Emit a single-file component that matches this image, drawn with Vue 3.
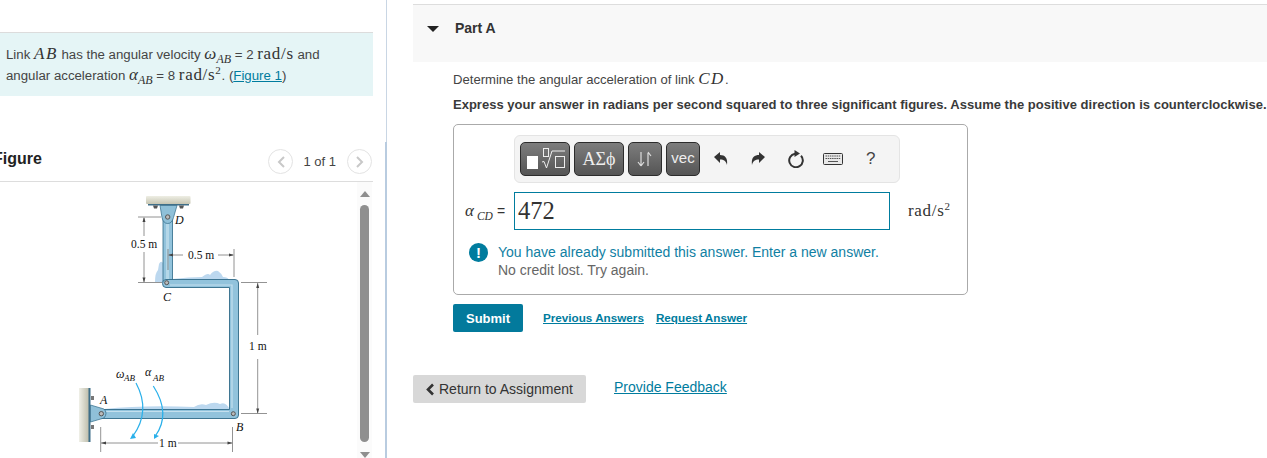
<script setup>
const tools = ['undo', 'redo', 'reset', 'keyboard', 'help']
</script>

<template>
  <div class="page">
    <aside class="left">
      <section class="intro">
        <p>Link <i class="m var">AB</i> has the angular velocity <i class="m sym">ω</i><sub class="m">AB</sub> = 2 <span class="m rad">rad/s</span> and</p>
        <p>angular acceleration <i class="m sym">α</i><sub class="m">AB</sub> = 8 <span class="m rad">rad/s<sup>2</sup></span>. (<a href="#">Figure 1</a>)</p>
      </section>
      <header class="fig-head">
        <h2>Figure</h2>
        <div class="pager">
          <span class="circle"><svg width="10" height="14" viewBox="0 0 10 14"><path d="M8 2 3 7l5 5" fill="none" stroke="#c8c8c8" stroke-width="2"/></svg></span>
          <span class="count">1 of 1</span>
          <span class="circle"><svg width="10" height="14" viewBox="0 0 10 14"><path d="M2 2l5 5-5 5" fill="none" stroke="#c8c8c8" stroke-width="2"/></svg></span>
        </div>
      </header>
      <div class="fig-body">
        <svg class="diagram" width="357" height="276" viewBox="0 182 357 276">
          <defs>
            <linearGradient id="stone" x1="0" y1="0" x2="0" y2="1">
              <stop offset="0" stop-color="#eeeee4"/>
              <stop offset="1" stop-color="#c6c5b2"/>
            </linearGradient>
            <linearGradient id="wall" x1="0" y1="0" x2="1" y2="0">
              <stop offset="0" stop-color="#f0f0e8"/>
              <stop offset="1" stop-color="#bdbcaa"/>
            </linearGradient>
          </defs>
          <!-- top support -->
          <rect x="146" y="196" width="44.500" height="8" rx="1" fill="url(#stone)"/>
          <rect x="148" y="204" width="41" height="1.500" fill="#3f6f89"/>
          <path d="M153 205.500h5l-1 3h-3zM179 205.500h5l-1 3h-3z" fill="#555"/>
          <!-- highlights -->
          <path d="M155 282q0-9 3-12l1-6q2-4 4-1v19zM172 279q18-2 30-2 6-5 8-2 4-5 8-4 3 2 5 6 5 0 6 3z" fill="#bcd8ef"/>
          <path d="M104 409q40-4 90-2 6-4 12-2 8-4 14-1 6-3 10 6v1H104z" fill="#bcd8ef"/>
          <!-- link CD -->
          <rect x="163" y="216" width="9.500" height="66" fill="#92c3dc" stroke="#2f6a88" stroke-width=".8"/>
          <rect x="166" y="220" width="3" height="60" fill="#b4d7e8"/>
          <path d="M160 205.500h17l-3.500 12q-1.500 6-5.800 6t-5.700-6z" fill="#8fc0d8" stroke="#2f6a88" stroke-width=".7"/>
          <!-- bent link CB -->
          <path d="M166 279.500H235q3.500 0 3.500 3.500V415q0 3.500-3.500 3.500H100V409.500H229.500V287.500H166q-3.500 0-3.500-4t3.500-4z" fill="#92c3dc" stroke="#2f6a88" stroke-width=".9"/>
          <path d="M170 285H232V408" fill="none" stroke="#c4e0ee" stroke-width="1.200"/>
          <path d="M106 411.500H229" fill="none" stroke="#c4e0ee" stroke-width="1"/>
          <!-- wall -->
          <rect x="79" y="388" width="10" height="54" fill="url(#wall)"/>
          <rect x="88.500" y="388" width="2" height="54" fill="#3f6f89"/>
          <path d="M91 396h3v4h-3zM91 425h3v4h-3z" fill="#777"/>
          <path d="M90.500 405 104 409q4 4 0 9l-13.500 4z" fill="#8fc0d8" stroke="#2f6a88" stroke-width=".7"/>
          <!-- pins -->
          <g fill="#bbb" stroke="#555" stroke-width="1">
            <circle cx="167.700" cy="217" r="2.200"/>
            <circle cx="166.700" cy="282.700" r="2"/>
            <circle cx="101.300" cy="413.700" r="2.200"/>
            <circle cx="233.300" cy="413.700" r="2"/>
          </g>
          <!-- dimension lines -->
          <g stroke="#777" stroke-width=".8" fill="none">
            <path d="M138 217h23M138 282.500h24M144 218v18M144 252v30"/>
            <path d="M168 249v21M234 249v28M169 255h14M218 255h15"/>
            <path d="M241 282.500h26M241 413.500h26M257.700 283v52M257.700 359v54"/>
            <path d="M100.700 427v25M232.500 427v25M101 443h57M178 443h54"/>
          </g>
          <g fill="#444">
            <path d="M144 217l-1.500 5h3zM144 282.500l-1.500-5h3zM168 255l5-1.500v3zM234 255l-5-1.500v3zM257.700 283l-1.500 5h3zM257.700 413.500l-1.500-5h3zM101 443l5-1.500v3zM232.500 443l-5-1.500v3z"/>
          </g>
          <!-- velocity arrows -->
          <g fill="none" stroke="#2ab0ea" stroke-width="1.200">
            <path d="M136 383q15 28-3 53"/>
            <path d="M153.300 386q18 28 2 50"/>
          </g>
          <path d="M130 439l6-1-3-5zM154 439l5-3-5-2z" fill="#2ab0ea"/>
          <!-- labels -->
          <g class="dim">
            <text x="131" y="248">0.5 m</text>
            <text x="188" y="259">0.5 m</text>
            <text x="249" y="350">1 m</text>
            <text x="159" y="447">1 m</text>
          </g>
          <g class="pt">
            <text x="175" y="224">D</text>
            <text x="163" y="301">C</text>
            <text x="100" y="404">A</text>
            <text x="236" y="431">B</text>
            <text x="116" y="378">ω</text>
            <text x="124" y="381" class="sub">AB</text>
            <text x="145" y="376">α</text>
            <text x="153" y="381" class="sub">AB</text>
          </g>
        </svg>
        <div class="scroll">
          <span class="arrow up"></span>
          <span class="thumb"></span>
          <span class="arrow down"></span>
        </div>
      </div>
    </aside>

    <div class="divider"><span class="thin"></span><span class="thick"></span></div>

    <main class="right">
      <header class="part">
        <span class="caret"></span>
        <h3>Part A</h3>
      </header>
      <div class="body">
        <p class="desc">Determine the angular acceleration of link <i class="m var">CD</i>.</p>
        <p class="task">Express your answer in radians per second squared to three significant figures. Assume the positive direction is counterclockwise.</p>

        <section class="box">
          <div class="toolbar">
            <button class="tb w50">
              <svg width="48" height="32" viewBox="0 0 48 32">
                <rect x="6" y="13" width="11" height="13" fill="#fff"/>
                <path d="M21 19l2-.5 2.500 6.500L31 8H44" fill="none" stroke="#eee" stroke-width="1"/>
                <rect x="22.500" y="5.500" width="5" height="8" fill="none" stroke="#eee"/>
                <rect x="34.500" y="13.500" width="9" height="11" fill="none" stroke="#eee"/>
              </svg>
            </button>
            <button class="tb w50 greek">ΑΣϕ</button>
            <button class="tb w34">
              <svg width="20" height="18" viewBox="0 0 20 18"><path d="M6 2v13M6 16l-3-4M6 16l3-4M13 16V3M13 2l3 4" fill="none" stroke="#ddd" stroke-width="1.200"/></svg>
            </button>
            <button class="tb w34 vec">vec</button>
            <div class="tools">
              <span v-for="t in tools" :key="t" class="tool">
                <svg v-if="t === 'undo'" width="16" height="16" viewBox="0 0 16 16"><path d="M1 6 7 1v3c5 0 8 3 7 10-1-4-3-5.500-7-5.500V12z" fill="#333"/></svg>
                <svg v-else-if="t === 'redo'" width="16" height="16" viewBox="0 0 16 16"><path d="M15 6 9 1v3C4 4 1 7 2 14c1-4 3-5.500 7-5.500V12z" fill="#333"/></svg>
                <svg v-else-if="t === 'reset'" width="18" height="18" viewBox="0 0 18 18"><path d="M14 5.800A6.800 6.800 0 1 1 8 3.700" fill="none" stroke="#333" stroke-width="2"/><path d="M7.500 0l5.500 3.500L7.500 7z" fill="#333"/></svg>
                <svg v-else-if="t === 'keyboard'" width="20" height="12" viewBox="0 0 20 12">
                  <rect x=".5" y=".5" width="19" height="11" rx="1" fill="#e8e8e8" stroke="#333"/>
                  <path d="M2.500 3h15M2.500 5.500h15" stroke="#555" stroke-dasharray="1.500 .7" fill="none"/>
                  <path d="M5 8.500h10" stroke="#555" fill="none"/>
                </svg>
                <span v-else class="q">?</span>
              </span>
            </div>
          </div>

          <div class="answer">
            <span class="label"><i class="m sym alpha">α</i><sub class="m">CD</sub><span class="eq">=</span></span>
            <div class="input">472</div>
            <span class="m rad unit">rad/s<sup>2</sup></span>
          </div>

          <div class="feedback">
            <span class="bang">!</span>
            <div class="msg">
              <div class="blue">You have already submitted this answer. Enter a new answer.</div>
              <div class="gray">No credit lost. Try again.</div>
            </div>
          </div>
        </section>

        <div class="actions">
          <button class="submit">Submit</button>
          <a href="#" class="bold first">Previous Answers</a>
          <a href="#" class="bold">Request Answer</a>
        </div>
      </div>

      <div class="bottom">
        <button class="return">
          <svg width="10" height="13" viewBox="0 0 10 13"><path d="M8 1.500 3 6.500l5 5" fill="none" stroke="#333" stroke-width="2.600"/></svg>
          Return to Assignment
        </button>
        <a href="#" class="fb">Provide Feedback</a>
      </div>
    </main>
  </div>
</template>

<style>
html, body { margin: 0; overflow: hidden; background: #fff; }
</style>

<style scoped>
.page {
  display: flex;
  width: 1267px;
  height: 458px;
  overflow: hidden;
  font-family: "Liberation Sans", Arial, sans-serif;
  font-size: 14px;
  color: #444;
}
p, h2, h3 { margin: 0; }
a { color: #007c9e; }
.m { font-family: "Liberation Serif", "DejaVu Serif", serif; color: #333; }
.var { font-size: 17px; letter-spacing: 1.500px; }
.sym { font-size: 17px; }
.rad { font-size: 17px; letter-spacing: .7px; }
sub.m { font-size: 12px; font-style: italic; line-height: 0; vertical-align: -4px; }
sup { font-size: 11px; line-height: 0; vertical-align: 6px; }

.left { width: 385px; flex: none; padding-top: 32px; box-sizing: border-box; }
.intro {
  width: 373px;
  height: 64px;
  box-sizing: border-box;
  border-top: 1px solid #dcdcdc;
  background: #e5f5f6;
  padding: 10px 0 0 6px;
  font-size: 13.250px;
}
.intro p { height: 21px; line-height: 21px; white-space: nowrap; }
.fig-head {
  width: 373px;
  height: 40px;
  margin-top: 46px;
  box-sizing: border-box;
  border-bottom: 1px solid #ddd;
  display: flex;
  justify-content: space-between;
  padding: 0 1px 7px 0;
  align-items: flex-end;
}
.fig-head h2 { margin-left: -7px; font-size: 16px; font-weight: 700; color: #222; line-height: 20px; padding-bottom: 5px; }
.pager { display: flex; align-items: center; }
.circle {
  width: 25px; height: 25px;
  box-sizing: border-box;
  border: 1px solid #e3e3e3;
  border-radius: 50%;
  display: flex; align-items: center; justify-content: center;
}
.count { margin: 0 11px 0 10px; font-size: 13px; color: #444; }
.fig-body { display: flex; height: 276px; }
.diagram { display: block; flex: none; }
.dim text { font: 11.500px "Liberation Serif", serif; fill: #111; }
.pt text { font: italic 12px "Liberation Serif", serif; fill: #111; }
.pt .sub { font-size: 9px; }
.scroll {
  width: 15px;
  height: 276px;
  background: #fbfbfb;
  display: flex;
  flex-direction: column;
  align-items: center;
}
.arrow { width: 0; height: 0; border-left: 5px solid transparent; border-right: 5px solid transparent; }
.up { border-bottom: 6px solid #8f8f8f; margin-top: 9px; }
.down { border-top: 6px solid #8f8f8f; margin-top: 10px; }
.thumb { width: 9px; height: 238px; background: #8f8f8f; border-radius: 5px; margin-top: 8px; }

.divider { width: 2px; flex: none; display: flex; flex-direction: column; }
.thin { height: 142px; width: 1px; margin-left: 1px; background: #c9d6e4; }
.thick { flex: 1; background: #b9cce0; }

.right { flex: 1; min-width: 0; padding-left: 26px; }
.part {
  margin-top: 4px;
  height: 58px;
  box-sizing: border-box;
  border-top: 1px solid #ddd;
  background: #f8f8f8;
  display: flex;
  align-items: flex-start;
  padding: 14px 0 0 14px;
}
.caret {
  width: 0; height: 0;
  margin-top: 7px;
  border-left: 6px solid transparent;
  border-right: 6px solid transparent;
  border-top: 6px solid #222;
}
.part h3 { margin-left: 16px; font-size: 14px; font-weight: 700; line-height: 18px; color: #333; }
.body { padding-left: 40px; }
.desc { margin-top: 7px; height: 20px; line-height: 20px; font-size: 13.100px; white-space: nowrap; }
.task { margin-top: 6px; height: 20px; line-height: 20px; font-size: 13px; font-weight: 700; letter-spacing: .01px; color: #3a3a3a; white-space: nowrap; }
.box {
  margin-top: 9px;
  width: 515px;
  height: 171px;
  box-sizing: border-box;
  border: 1px solid #aaa;
  border-radius: 5px;
  padding-top: 10px;
}
.toolbar {
  margin-left: 60px;
  width: 386px;
  height: 48px;
  box-sizing: border-box;
  background: #f4f4f4;
  border: 1px solid #e4e4e4;
  border-radius: 6px;
  display: flex;
  align-items: center;
  padding-left: 5px;
  gap: 4px;
}
.tb {
  height: 34px;
  padding: 0;
  box-sizing: border-box;
  border: 1px solid #2c2c2c;
  border-radius: 5px;
  background: linear-gradient(#7d7d7d, #555);
  color: #eee;
  display: flex;
  align-items: center;
  justify-content: center;
}
.w50 { width: 50px; }
.w34 { width: 34px; }
.greek { font: 18px "Liberation Serif", serif; }
.vec { font: 15px "Liberation Sans", sans-serif; padding-bottom: 3px; }
.tools { display: flex; margin-left: -2px; }
.tool { width: 37.500px; height: 34px; display: flex; align-items: center; justify-content: center; }
.q { font-size: 17px; color: #444; }
.answer { display: flex; align-items: center; height: 38px; margin-top: 9px; }
.label { width: 60px; box-sizing: border-box; padding-left: 11px; white-space: nowrap; color: #333; }
.alpha { margin-right: 3px; }
.answer sub.m { font-size: 11.500px; }
.eq { font-size: 14px; margin-left: 4px; }
.input {
  width: 376px;
  height: 38px;
  box-sizing: border-box;
  border: 1px solid #007c9e;
  padding-left: 3px;
  font: 24.500px/36px "Liberation Serif", serif;
  color: #333;
}
.unit { margin-left: 18px; font-size: 17px; }
.feedback { display: flex; margin: 13px 0 0 15px; }
.bang {
  width: 19px; height: 19px;
  border-radius: 50%;
  background: #007c9e;
  color: #fff;
  font-weight: 700;
  font-size: 15px;
  line-height: 19px;
  text-align: center;
  flex: none;
}
.msg { margin-left: 10px; line-height: 18px; }
.blue { color: #1080a3; }
.gray { color: #666; }
.actions { display: flex; align-items: center; margin-top: 9px; height: 28px; }
.submit {
  width: 70px; height: 28px;
  padding: 0;
  border: 0;
  border-radius: 2px;
  background: #037a9c;
  color: #fff;
  font: 700 13px "Liberation Sans", sans-serif;
}
.bold { font-size: 11.700px; font-weight: 700; margin: 0 0 2px 12px; }
.first { margin-left: 20px; }
.bottom { display: flex; align-items: flex-start; margin-top: 43px; }
.return {
  width: 173px; height: 28px;
  padding: 0 0 0 12px;
  border: 0;
  border-radius: 2px;
  background: #d8d8d8;
  color: #333;
  font: 14px "Liberation Sans", sans-serif;
  display: flex;
  align-items: center;
  gap: 4px;
}
.fb { margin: 4px 0 0 28px; }
</style>
